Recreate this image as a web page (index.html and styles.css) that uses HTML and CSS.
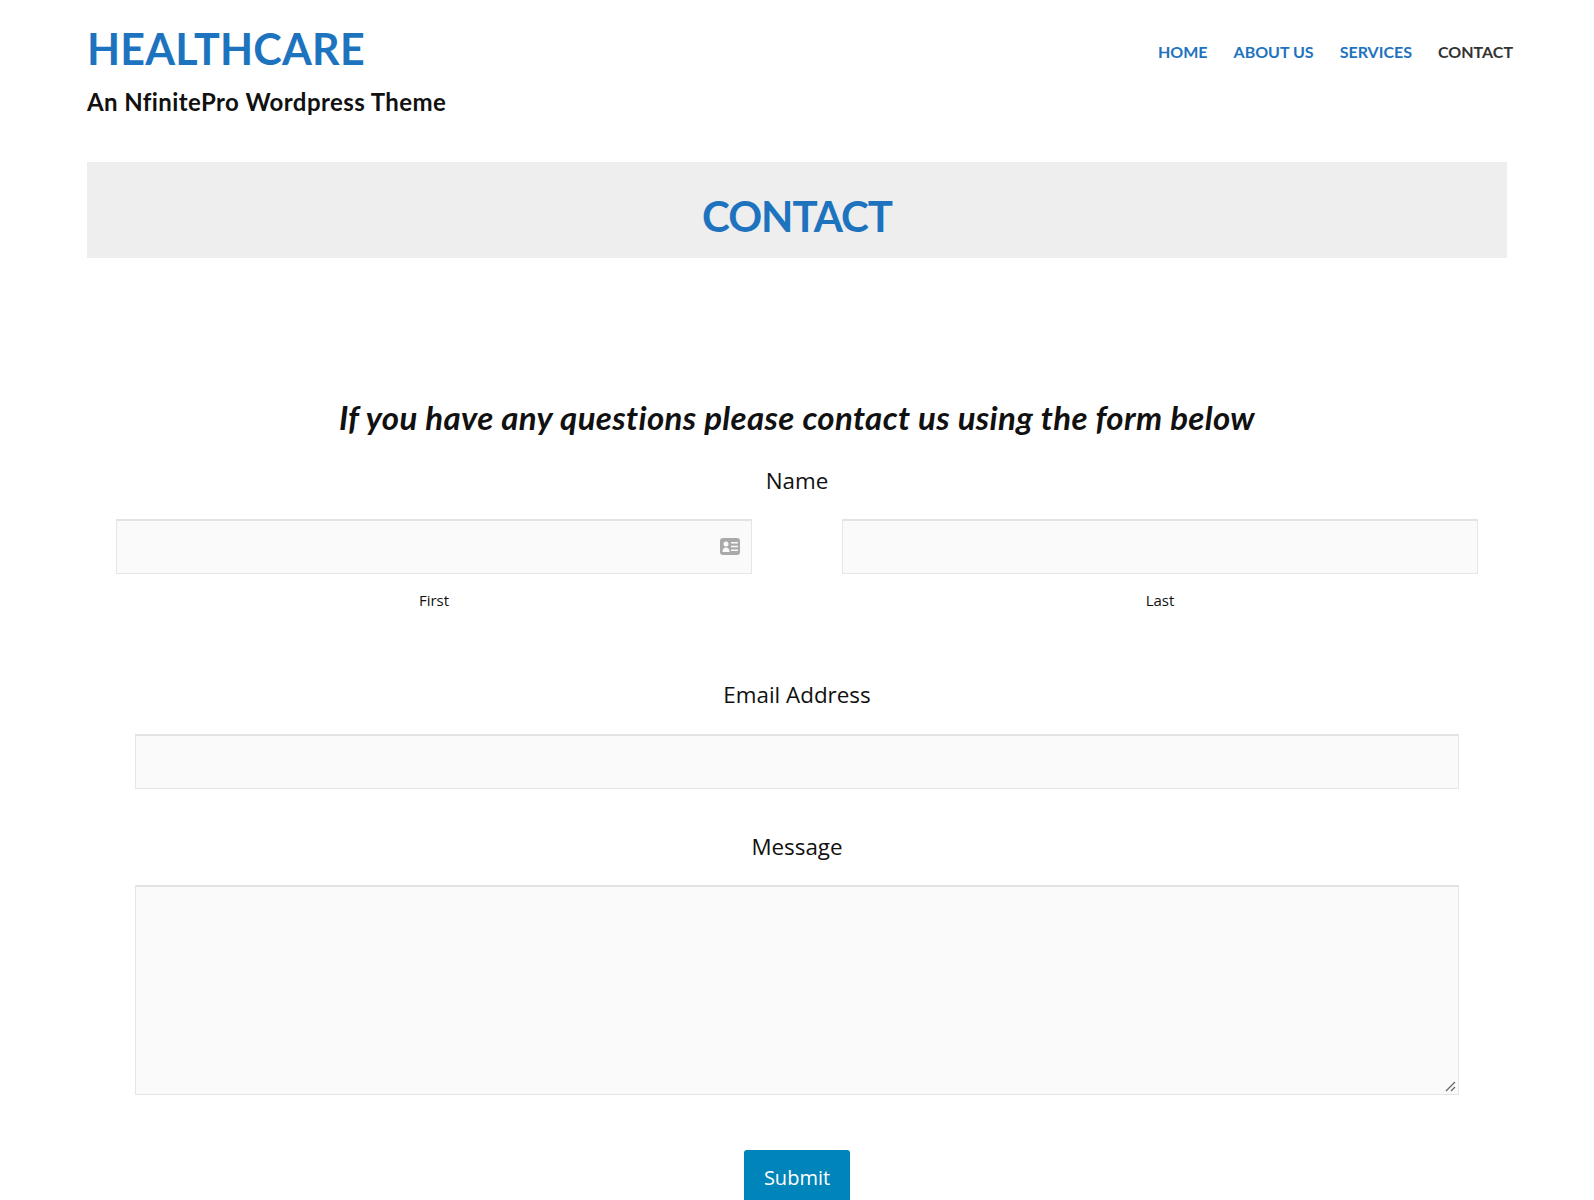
FILE: index.html
```html
<!DOCTYPE html>
<html lang="en">
<head>
  <meta charset="UTF-8">
  <title>Contact - Healthcare</title>
  <link rel="stylesheet" href="styles.css">
</head>
<body>

<header class="site-header">
  <div class="brand">
    <a class="site-title" href="#">HEALTHCARE</a>
    <p class="tagline">An NfinitePro Wordpress Theme</p>
  </div>
  <nav class="main-nav">
    <a href="#">HOME</a>
    <a href="#">ABOUT US</a>
    <a href="#">SERVICES</a>
    <a class="current" href="#">CONTACT</a>
  </nav>
</header>

<div class="page-banner">
  <h1>CONTACT</h1>
</div>

<main class="content">
  <h2 class="intro">If you have any questions please contact us using the form below</h2>

  <form class="contact-form">
    <div class="field-label">Name</div>
    <div class="name-row">
      <div class="name-col">
        <div class="input-wrap">
          <input type="text" class="text-input">
          <!-- Ícone do preenchimento automático -->
          <svg class="card-icon" width="20" height="17" viewBox="0 0 20 17" xmlns="http://www.w3.org/2000/svg">
            <rect width="20" height="17" rx="3" fill="#a9a9a9"/>
            <circle cx="6" cy="6" r="2.5" fill="#fafafa"/>
            <path d="M2.5 14c0-3 1.4-4.5 3.5-4.5S9.5 11 9.5 14z" fill="#fafafa"/>
            <path d="M11 4h7v1.6h-7zM11 7.7h7v1.6h-7zM11 11.4h7V13h-7z" fill="#fafafa"/>
          </svg>
        </div>
        <span class="sub-label">First</span>
      </div>
      <div class="name-col">
        <input type="text" class="text-input">
        <span class="sub-label">Last</span>
      </div>
    </div>

    <div class="field-label email-label">Email Address</div>
    <div class="wide-field">
      <input type="email" class="text-input">
    </div>

    <div class="field-label message-label">Message</div>
    <div class="wide-field message-field">
      <textarea class="text-area"></textarea>
      <!-- Alça de redimensionar -->
      <svg class="resize-grip" width="11" height="11" viewBox="0 0 11 11" xmlns="http://www.w3.org/2000/svg">
        <path d="M1 10 10 1M6 10l4-4" fill="none" stroke="#666" stroke-width="1.3"/>
      </svg>
    </div>

    <div class="submit-row">
      <button type="button" class="submit-btn">Submit</button>
    </div>
  </form>
</main>

</body>
</html>
```

FILE: styles.css
```css
* {
  box-sizing: border-box;
}

html, body {
  height: 1200px;
  overflow: hidden;
}

body {
  margin: 0;
  background: #fff;
  color: #111;
  font-family: "Open Sans", sans-serif;
}

.site-header {
  display: flex;
  justify-content: space-between;
  align-items: flex-start;
  height: 162px;
  padding: 22px 87px 0 87px;
}

.site-title {
  display: block;
  color: #1e73be;
  font-family: Lato, sans-serif;
  font-size: 43px;
  font-weight: 700;
  line-height: 54px;
  letter-spacing: 0.2px;
  text-decoration: none;
}

.tagline {
  margin: 11px 0 0;
  font-family: Lato, sans-serif;
  font-size: 24px;
  font-weight: 700;
  line-height: 30px;
  letter-spacing: 0.42px;
  color: #111;
}

.main-nav {
  display: flex;
  gap: 26px;
  padding-top: 19px;
  margin-right: -6px;
}

.main-nav a {
  color: #1e73be;
  font-family: Lato, sans-serif;
  font-size: 16px;
  font-weight: 700;
  line-height: 22px;
  text-decoration: none;
}

.main-nav a.current {
  color: #333;
}

.page-banner {
  height: 96px;
  margin: 0 87px;
  background: #eee;
  text-align: center;
}

.page-banner h1 {
  margin: 0;
  padding-top: 27px;
  color: #1e73be;
  font-family: Lato, sans-serif;
  font-size: 42px;
  font-weight: 700;
  line-height: 54px;
  letter-spacing: -1px;
}

.content {
  padding: 0 116px;
}

.intro {
  margin: 139px 0 0;
  font-family: Lato, sans-serif;
  font-size: 33px;
  font-style: italic;
  font-weight: 700;
  line-height: 40px;
  letter-spacing: 0.37px;
  text-align: center;
  color: #111;
}

.field-label {
  font-size: 22.4px;
  line-height: 28px;
  text-align: center;
  color: #111;
}

.contact-form > .field-label:first-child {
  margin-top: 30px;
}

.name-row {
  display: flex;
  justify-content: space-between;
  margin-top: 24px;
}

.name-col {
  width: 636px;
  text-align: center;
}

.input-wrap {
  position: relative;
}

.text-input {
  display: block;
  width: 100%;
  height: 55px;
  background: #fafafa;
  border: 1px solid #e6e6e6;
  border-top: 2px solid #e3e3e3;
  outline: none;
}

.card-icon {
  position: absolute;
  top: 19px;
  right: 12px;
}

.sub-label {
  display: block;
  margin-top: 16px;
  font-size: 15px;
  line-height: 20px;
  color: #111;
}

.email-label {
  margin-top: 71px;
}

.wide-field {
  margin: 25px 19px 0;
}

.message-label {
  margin-top: 44px;
  margin-bottom: -1px;
}

.message-field {
  position: relative;
}

.text-area {
  display: block;
  width: 100%;
  height: 210px;
  background: #fafafa;
  border: 1px solid #e6e6e6;
  border-top: 2px solid #e3e3e3;
  outline: none;
  resize: none;
}

.resize-grip {
  position: absolute;
  right: 3px;
  bottom: 3px;
}

.submit-row {
  margin-top: 55px;
  text-align: center;
}

.submit-btn {
  width: 106px;
  height: 55px;
  background: #0085ba;
  border: none;
  border-radius: 3px;
  color: #fff;
  font-family: "Open Sans", sans-serif;
  font-size: 20px;
}
```
